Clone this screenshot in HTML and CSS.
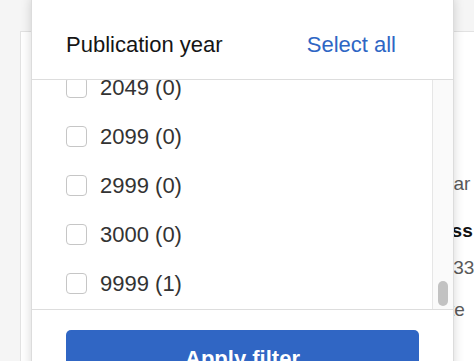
FILE: index.html
```html
<!DOCTYPE html>
<html lang="en">
<head>
<meta charset="utf-8">
<title>Publication year filter</title>
<link rel="stylesheet" href="styles.css">
</head>
<body>
  <div class="page">
    <div class="card">
      <div class="card-lines">
        <div class="line muted first">Year</div>
        <div class="line strong second">Class</div>
        <div class="line muted third">2033:</div>
        <div class="line muted fourth">Site</div>
      </div>
    </div>

    <div class="panel">
      <div class="panel-head">
        <span class="panel-title">Publication year</span>
        <a class="select-all" href="#">Select all</a>
      </div>
      <div class="panel-body">
        <div class="list-viewport">
          <ul class="options">
            <li class="option"><span class="box"></span><span class="label">2049 (0)</span></li>
            <li class="option"><span class="box"></span><span class="label">2099 (0)</span></li>
            <li class="option"><span class="box"></span><span class="label">2999 (0)</span></li>
            <li class="option"><span class="box"></span><span class="label">3000 (0)</span></li>
            <li class="option"><span class="box"></span><span class="label">9999 (1)</span></li>
          </ul>
        </div>
        <div class="scroll-track"><div class="scroll-thumb"></div></div>
      </div>
      <div class="panel-foot">
        <button class="apply" type="button">Apply filter</button>
      </div>
    </div>
  </div>
</body>
</html>
```

FILE: styles.css
```css
* { box-sizing: border-box; }

html, body {
  margin: 0;
  padding: 0;
  height: 100%;
}

body {
  background: #f5f5f5;
  font-family: "Liberation Sans", Arial, Helvetica, sans-serif;
  overflow: hidden;
}

.page {
  position: relative;
  width: 474px;
  height: 361px;
  overflow: hidden;
  padding: 31px 0 0 20px;
}

.card {
  height: 400px;
  background: #ffffff;
  border-top: 1px solid #e2e2e2;
  border-left: 1px solid #e2e2e2;
}

.card-lines {
  padding: 140px 0 0 411px;
  display: flex;
  flex-direction: column;
}

.line {
  font-size: 19px;
  line-height: 24px;
  white-space: nowrap;
}

.muted { color: #5a5a5a; }
.strong { color: #111; font-weight: 700; }
.second { margin-top: 23px; margin-left: -10px; }
.third { margin-top: 13px; }
.fourth { margin-top: 18px; }

/* dropdown overlay */
.panel {
  position: absolute;
  left: 31px;
  top: -4px;
  width: 423px;
  height: 420px;
  background: #ffffff;
  border-left: 1px solid #dcdcdc;
  border-right: 1px solid #dcdcdc;
  box-shadow: 0 2px 10px rgba(0, 0, 0, 0.16);
  display: flex;
  flex-direction: column;
}

.panel-head {
  height: 84px;
  padding: 36px 57px 0 34px;
  display: flex;
  justify-content: space-between;
  align-items: flex-start;
  border-bottom: 1px solid #dddddd;
  flex: none;
}

.panel-title {
  font-size: 22px;
  line-height: 26px;
  color: #151515;
}

.select-all {
  font-size: 22px;
  line-height: 26px;
  color: #2e66c4;
  text-decoration: none;
}

.panel-body {
  height: 230px;
  display: flex;
  flex: none;
  border-bottom: 1px solid #dddddd;
}

.list-viewport {
  flex: 1;
  overflow: hidden;
}

.options {
  list-style: none;
  margin: -17px 0 0 0;
  padding: 0 0 0 34px;
}

.option {
  height: 49px;
  display: flex;
  align-items: center;
  gap: 13px;
}

.box {
  width: 21px;
  height: 21px;
  border: 1px solid #c6c6c6;
  border-radius: 4px;
  background: #fff;
  flex: none;
}

.label {
  font-size: 22px;
  line-height: 26px;
  color: #333333;
}

.scroll-track {
  width: 21px;
  flex: none;
  background: #fafafa;
  border-left: 1px solid #e6e6e6;
  position: relative;
}

.scroll-thumb {
  position: absolute;
  left: 5px;
  top: 201px;
  width: 10px;
  height: 25px;
  border-radius: 5px;
  background: #c2c2c2;
}

.panel-foot {
  padding: 20px 34px 0 34px;
  flex: none;
}

.apply {
  display: block;
  width: 100%;
  height: 58px;
  border: none;
  border-radius: 5px;
  background: #3066c4;
  color: #ffffff;
  font-family: "Liberation Sans", Arial, Helvetica, sans-serif;
  font-size: 22px;
  font-weight: 700;
  padding: 0;
}
```
